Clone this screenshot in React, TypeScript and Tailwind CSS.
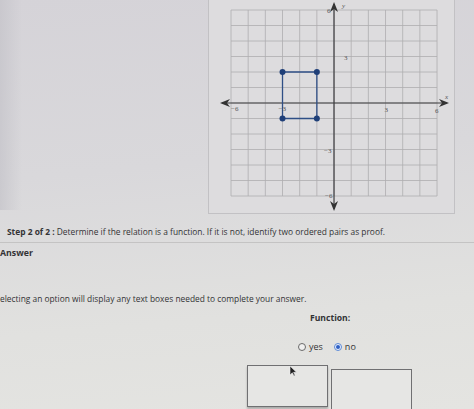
import React from "react";

const X0 = 22;
const CW = 17.17;
const Y0 = 10;
const CH = 15.5;
const OX = X0 + 6 * CW;
const OY = Y0 + 6 * CH;

function Graph() {
  const v: React.ReactNode[] = [];
  for (let i = 0; i <= 12; i++) {
    v.push(<line key={"v" + i} x1={X0 + i * CW} y1={Y0} x2={X0 + i * CW} y2={Y0 + 12 * CH} stroke="#aeadb0" strokeWidth={0.8} />);
    v.push(<line key={"h" + i} x1={X0} y1={Y0 + i * CH} x2={X0 + 12 * CW} y2={Y0 + i * CH} stroke="#aeadb0" strokeWidth={0.8} />);
  }
  const px = (x: number) => OX + x * CW;
  const py = (y: number) => OY - y * CH;
  const pts: [number, number][] = [[-3, 2], [-1, 2], [-1, -1], [-3, -1]];
  return (
    <svg width="247" height="213" viewBox="0 0 247 213" className="block">
      {v}
      <line x1={OX} y1={4} x2={OX} y2={209} stroke="#3c3c3e" strokeWidth={1.2} />
      <line x1={13} y1={OY} x2={238} y2={OY} stroke="#3c3c3e" strokeWidth={1.2} />
      <path d={`M${OX} 2 L${OX - 4} 12 L${OX} 9 L${OX + 4} 12 Z`} fill="#333" />
      <path d={`M${OX} 211 L${OX - 4} 201 L${OX} 204 L${OX + 4} 201 Z`} fill="#333" />
      <path d={`M11 ${OY} L21 ${OY - 4} L18 ${OY} L21 ${OY + 4} Z`} fill="#333" />
      <path d={`M240 ${OY} L230 ${OY - 4} L233 ${OY} L230 ${OY + 4} Z`} fill="#333" />
      <polygon points={pts.map(([x, y]) => `${px(x)},${py(y)}`).join(" ")} fill="none" stroke="#2f4f86" strokeWidth={1.3} />
      {pts.map(([x, y], i) => (
        <circle key={i} cx={px(x)} cy={py(y)} r={3} fill="#1f3f78" />
      ))}
      <g fontFamily="'Liberation Serif', serif" fontSize="7" fill="#555">
        <text x={OX + 8} y={8} fontStyle="italic">y</text>
        <text x={OX - 7} y={13}>6</text>
        <text x={OX + 10} y={py(3) + 3}>3</text>
        <text x={OX - 10} y={py(-3) + 3}>−3</text>
        <text x={OX - 9} y={py(-6) + 2}>−6</text>
        <text x={236} y={OY - 4} fontStyle="italic">x</text>
        <text x={22} y={OY + 8}>−6</text>
        <text x={px(-3) - 4} y={OY + 8}>−3</text>
        <text x={px(3) - 1} y={OY + 9}>3</text>
        <text x={px(6) - 2} y={OY + 10}>6</text>
      </g>
    </svg>
  );
}

export default function App() {
  return (
    <div
      className="relative w-[474px] h-[409px] overflow-hidden text-[#333335]"
      style={{ fontFamily: "'Open Sans', 'Noto Sans', sans-serif", background: "linear-gradient(175deg, #d5d3d8 0%, #d9d8db 40%, #e1e1df 75%, #e4e4e1 100%)" }}
    >
      <div className="absolute left-0 top-0 w-[22px] h-[210px] bg-gradient-to-r from-[#c4c3c9] to-transparent opacity-70" />
      <div className="relative flex flex-col">
        <div className="flex">
          <div className="ml-[208px] w-[247px] h-[214px] border border-t-0 border-[#c2c1c4] bg-[#dddcde]">
            <Graph />
          </div>
        </div>
        <div className="pl-[7px] pt-[12px] text-[8.4px] leading-[12px] whitespace-nowrap">
          <span className="font-bold">Step 2 of 2 :</span> Determine if the relation is a function. If it is not, identify two ordered pairs as proof.
        </div>
        <div className="mt-[4px] h-px bg-[#c4c3c3] w-full" />
        <div className="pt-[4px] text-[8.8px] leading-[12px] font-bold">Answer</div>
        <div className="pt-[34px] text-[8.4px] leading-[12px] whitespace-nowrap">
          electing an option will display any text boxes needed to complete your answer.
        </div>
        <div className="pl-[310px] pt-[7px] text-[8.6px] leading-[12px] font-bold">Function:</div>
        <div className="flex items-center pl-[298px] pt-[17px] text-[9px] leading-[12px] gap-[3px]">
          <span className="w-[8px] h-[8px] rounded-full border border-[#6a6a6a] bg-[#f0f0f0]" />
          <span className="mr-[8px]">yes</span>
          <span className="w-[8px] h-[8px] rounded-full border border-[#5d8ad6] bg-[#e8eefa] flex items-center justify-center">
            <span className="w-[4px] h-[4px] rounded-full bg-[#2d5fc4]" />
          </span>
          <span>no</span>
        </div>
        <div className="flex items-start pl-[247px] pt-[12px] gap-[3px]">
          <div className="w-[81px] h-[42px] border border-[#707072] bg-[#e6e6e4] shadow-[0_2px_2px_rgba(0,0,0,0.25)]" />
          <div className="mt-[4px] w-[81px] h-[42px] border border-[#707072] bg-[#e6e6e4]" />
        </div>
      </div>
      <svg className="absolute left-[289px] top-[365px]" width="8" height="12" viewBox="0 0 8 12">
        <path d="M1 1 L1 10 L3.3 7.8 L5 11 L6.2 10.4 L4.6 7.3 L7.5 7.3 Z" fill="#222" stroke="#eee" strokeWidth="0.6" />
      </svg>
    </div>
  );
}
